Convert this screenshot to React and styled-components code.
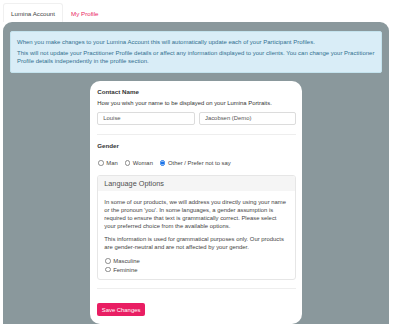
import styled, {createGlobalStyle} from 'styled-components'

const GlobalStyle = createGlobalStyle`
  html, body {
    margin: 0;
    padding: 0;
    background: #ffffff;
    font-family: "Liberation Sans", Arial, sans-serif;
    color: #333333;
  }
  * {
    box-sizing: border-box;
  }
`

export default function App() {
  return (
    <>
      <GlobalStyle />
      <Page>
        <TabBar>
          <Tab active>Lumina Account</Tab>
          <Tab>My Profile</Tab>
        </TabBar>
        <Panel>
          <Alert>
            <AlertText>
              When you make changes to your Lumina Account this will automatically update each of
              your Participant Profiles.
            </AlertText>
            <AlertText>
              This will not update your Practitioner Profile details or affect any information
              displayed to your clients. You can change your Practitioner Profile details
              independently in the profile section.
            </AlertText>
          </Alert>
          <Card>
            <Section>
              <Title>Contact Name</Title>
              <Hint>How you wish your name to be displayed on your Lumina Portraits.</Hint>
              <InputRow>
                <TextInput defaultValue="Louise" />
                <TextInput defaultValue="Jacobsen (Demo)" />
              </InputRow>
            </Section>
            <Divider top={8.8} bottom={6.7} />
            <Section>
              <Title>Gender</Title>
              <RadioRow>
                <RadioLabel>
                  <Radio type="radio" name="gender" />
                  Man
                </RadioLabel>
                <RadioLabel>
                  <Radio type="radio" name="gender" />
                  Woman
                </RadioLabel>
                <RadioLabel>
                  <Radio type="radio" name="gender" defaultChecked />
                  Other / Prefer not to say
                </RadioLabel>
              </RadioRow>
              <OptionsBox>
                <OptionsHeader>Language Options</OptionsHeader>
                <OptionsBody>
                  <BodyText>
                    In some of our products, we will address you directly using your name or the
                    pronoun 'you'. In some languages, a gender assumption is required to ensure
                    that text is grammatically correct. Please select your preferred choice from
                    the available options.
                  </BodyText>
                  <BodyText>
                    This information is used for grammatical purposes only. Our products are
                    gender-neutral and are not affected by your gender.
                  </BodyText>
                  <RadioStack>
                    <RadioLabel>
                      <Radio type="radio" name="language" />
                      Masculine
                    </RadioLabel>
                    <RadioLabel>
                      <Radio type="radio" name="language" />
                      Feminine
                    </RadioLabel>
                  </RadioStack>
                </OptionsBody>
              </OptionsBox>
            </Section>
            <Divider top={8} bottom={8.7} />
            <SaveButton>Save Changes</SaveButton>
          </Card>
        </Panel>
      </Page>
    </>
  )
}

const Page = styled.div`
  width: 393px;
  height: 324px;
  overflow: hidden;
`

const TabBar = styled.div`
  display: flex;
  padding: 3px 3px 0;
  height: 22px;
`

const Tab = styled.div`
  height: 19px;
  padding: 0 7px;
  display: flex;
  align-items: center;
  font-size: 6.2px;
  color: ${props => (props.active ? '#444444' : '#e91e63')};
  background: #ffffff;
  border: 1px solid ${props => (props.active ? '#f0f0f0' : 'transparent')};
  border-bottom: none;
  border-radius: 3px 3px 0 0;
`

const Panel = styled.div`
  margin: 0 4px 0 3px;
  padding: 9px 7px 20px;
  background: #8a989c;
  border-radius: 9px 9px 0 0;
`

const Alert = styled.div`
  background: #d9edf7;
  border: 1px solid #c4e3ee;
  border-radius: 2px;
  padding: 6px 6px 5.6px;
  color: #31708f;
`

const AlertText = styled.p`
  margin: 0 0 2.3px;
  font-size: 6px;
  line-height: 8.6px;

  &:last-child {
    margin-bottom: 0;
  }
`

const Card = styled.div`
  width: 211.5px;
  margin: 8.3px auto 0;
  background: #ffffff;
  border-radius: 10px;
  padding: 7.3px 5.5px 7.3px 7px;
`

const Section = styled.div`
  display: flex;
  flex-direction: column;
`

const Title = styled.div`
  font-size: 6.2px;
  font-weight: bold;
  line-height: 8px;
  color: #333333;
`

const Hint = styled.div`
  font-size: 5.9px;
  line-height: 8px;
  margin-top: 2.4px;
  color: #333333;
`

const InputRow = styled.div`
  display: grid;
  grid-template-columns: 1fr 1fr;
  gap: 4.4px;
  margin-top: 5px;
`

const TextInput = styled.input`
  height: 13.5px;
  width: 100%;
  border: 1px solid #dcdcdc;
  border-radius: 2px;
  padding: 0 5px;
  font-family: "Liberation Sans", Arial, sans-serif;
  font-size: 5.9px;
  color: #555555;
  outline: none;
`

const Divider = styled.div`
  height: 1px;
  background: #eeeeee;
  margin: ${props => props.top}px 0 ${props => props.bottom}px;
`

const RadioRow = styled.div`
  display: flex;
  gap: 6px;
  margin-top: 9.6px;
`

const RadioStack = styled.div`
  display: flex;
  flex-direction: column;
  gap: 0.7px;
  margin-top: 6px;
`

const RadioLabel = styled.label`
  display: flex;
  align-items: center;
  gap: 2.5px;
  font-size: 5.9px;
  line-height: 8px;
  color: #444444;
`

const Radio = styled.input`
  appearance: none;
  margin: 0 0 0 1px;
  width: 5.5px;
  height: 5.5px;
  border: 0.8px solid #8a8a8a;
  border-radius: 50%;
  background: #ffffff;

  &:checked {
    border-color: #1a73e8;
    background: radial-gradient(circle, #1a73e8 0 1.4px, #ffffff 1.6px);
  }
`

const OptionsBox = styled.div`
  margin-top: 7.7px;
  border: 1px solid #e6e6e6;
  border-radius: 3px;
  overflow: hidden;
`

const OptionsHeader = styled.div`
  height: 15px;
  display: flex;
  align-items: center;
  padding: 0 6px;
  background: #f5f5f5;
  font-size: 7.3px;
  color: #505050;
`

const OptionsBody = styled.div`
  padding: 6.7px 6px 5.3px;
`

const BodyText = styled.p`
  margin: 0 0 5.3px;
  font-size: 5.9px;
  line-height: 8px;
  color: #444444;

  &:last-of-type {
    margin-bottom: 0;
  }
`

const SaveButton = styled.button`
  height: 13.3px;
  padding: 0 4.5px;
  border: none;
  border-radius: 2px;
  background: #e91e63;
  color: #ffffff;
  font-family: "Liberation Sans", Arial, sans-serif;
  font-size: 5.9px;
  cursor: pointer;
`
